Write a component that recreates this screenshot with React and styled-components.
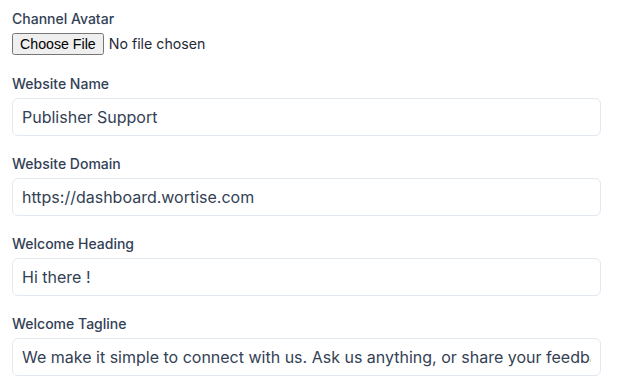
import React from "react";
import styled, { createGlobalStyle } from "styled-components";

const Global = createGlobalStyle`
  body { margin: 0; background: #ffffff; font-family: Inter, "Noto Sans", sans-serif; }
`;

const Form = styled.form`
  display: flex;
  flex-direction: column;
  gap: 18.5px;
  padding: 9px 22px 0 12px;
  width: 589px;
`;

const Field = styled.div`
  display: flex;
  flex-direction: column;
  gap: ${(p) => (p.$file ? "4px" : "3.5px")};
`;

const Label = styled.label`
  font-size: 14px;
  line-height: 20px;
  color: #334155;
  font-weight: 500;
`;

const FileInput = styled.input`
  font-family: Inter, "Noto Sans", sans-serif;
  font-size: 14.2px;
  color: #1f2937;
  height: 22.5px;

  &::file-selector-button {
    margin-right: 5px;
  }
`;

const TextInput = styled.input`
  box-sizing: border-box;
  width: 100%;
  height: 38px;
  border: 1px solid #e2e8f0;
  border-radius: 6px;
  padding: 1px 9px 0;
  font-family: Inter, "Noto Sans", sans-serif;
  font-size: 16px;
  color: #334155;
  background: #fff;
  outline: none;
`;

const fields = [
  ["Website Name", "Publisher Support"],
  ["Website Domain", "https://dashboard.wortise.com"],
  ["Welcome Heading", "Hi there !"],
  ["Welcome Tagline", "We make it simple to connect with us. Ask us anything, or share your feedback."],
];

export default function App() {
  return (
    <>
      <Global />
      <Form>
        <Field $file>
          <Label>Channel Avatar</Label>
          <FileInput type="file" />
        </Field>
        {fields.map(([l, v]) => (
          <Field key={l}>
            <Label>{l}</Label>
            <TextInput defaultValue={v} />
          </Field>
        ))}
      </Form>
    </>
  );
}
